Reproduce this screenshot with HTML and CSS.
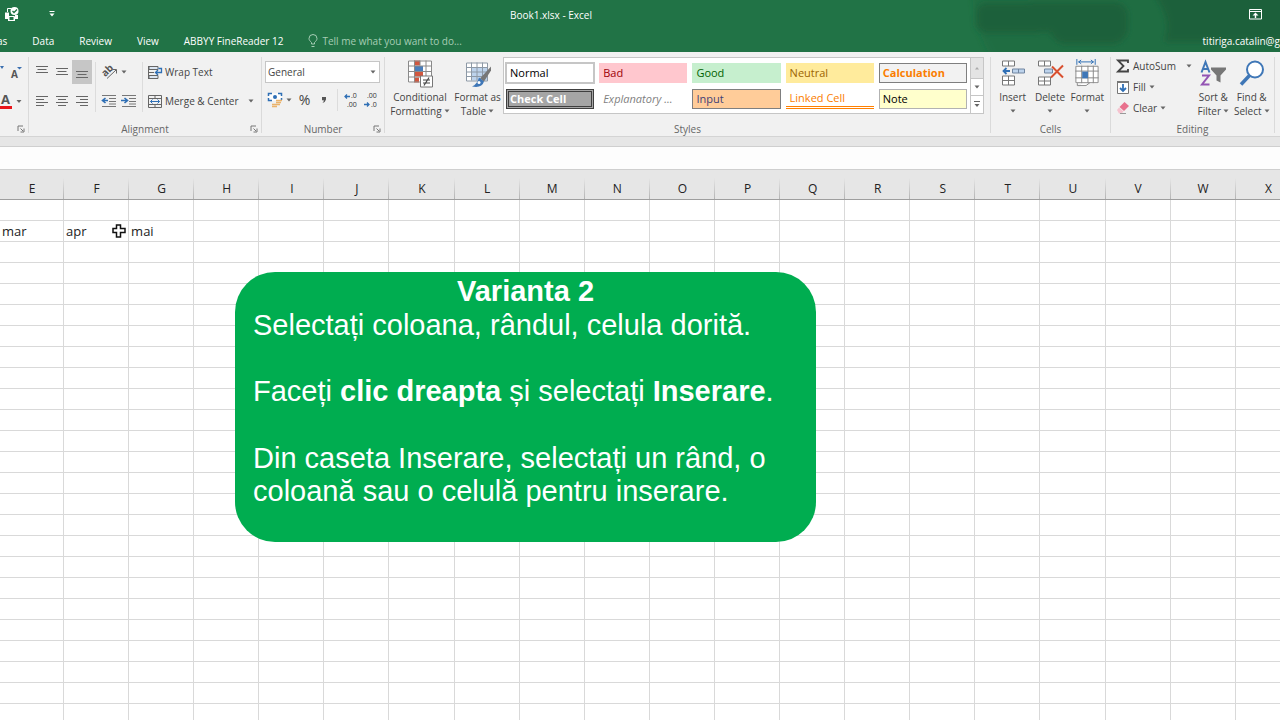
FILE: index.html
```
<!DOCTYPE html>
<html lang="ro">
<head>
    <meta charset="UTF-8">
    <meta name="viewport" content="width=device-width, initial-scale=1.0">
    <title>Book1.xlsx - Excel</title>
    <link rel="stylesheet" href="styles.css">
</head>
<body>
    <svg class="defs" aria-hidden="true">
        <symbol id="caret" viewBox="0 0 6 4"><path d="M0.5 0.5h5L3 3.5z" fill="#666"/></symbol>
        <symbol id="launcher" viewBox="0 0 8 8"><path d="M1 6V1h5M3.5 3.5L6 6M7 3.5V7H3.5" fill="none" stroke="#777"/></symbol>
    </svg>

    <header class="app-header">
        <svg class="smudges" viewBox="0 0 320 52" aria-hidden="true">
            <defs><filter id="soft"><feGaussianBlur stdDeviation="3"/></filter></defs>
            <g fill="#1e613b" filter="url(#soft)">
                <path d="M12-10h360v80H40Q16 40 12-10z" opacity="0.35"/>
                <rect x="16" y="3" width="70" height="30" rx="10"/>
                <rect x="60" y="2" width="108" height="30" rx="14"/>
                <rect x="90" y="8" width="78" height="36" rx="16"/>
                <path d="M190-10h180v52H204q10-24-14-52z"/>
            </g>
        </svg>
        <div class="title-bar">
            <button class="quick-button" aria-label="Print preview">
                <svg width="16" height="16" viewBox="0 0 16 16">
                    <path d="M1 6.5h4v4h6V9h3v4h-3v2H4v-2H1z" fill="#fff"/>
                    <rect x="5" y="10.5" width="5" height="4" fill="#217346" stroke="#fff"/>
                    <path d="M3.5 6V2.500h4" fill="none" stroke="#fff"/>
                    <circle cx="10.500" cy="5" r="4" fill="#fff"/>
                    <path d="M8.500 5l1.500 1.500L13 3.500" fill="none" stroke="#217346" stroke-width="1.300"/>
                </svg>
            </button>
            <button class="quick-button" aria-label="Customize toolbar">
                <svg width="6" height="6" viewBox="0 0 6 6"><path d="M0.500 0h5v1h-5zM0.500 2.500h5L3 5.500z" fill="#fff"/></svg>
            </button>
            <h1 class="file-name">Book1.xlsx - Excel</h1>
            <button class="display-button" aria-label="Ribbon display options">
                <svg width="13" height="11" viewBox="0 0 13 11">
                    <path d="M0.500 0.500h12v9.500h-12zM0.500 2.500h12" fill="none" stroke="#fff"/>
                    <path d="M6.500 3.500L9.500 6.500H7.200V9H5.800V6.500H3.500z" fill="#fff"/>
                </svg>
            </button>
        </div>
        <nav class="tabs">
            <a href="#">as</a>
            <a href="#">Data</a>
            <a href="#">Review</a>
            <a href="#">View</a>
            <a href="#">ABBYY FineReader 12</a>
            <label class="tell-me">
                <svg width="10" height="14" viewBox="0 0 10 14"><path d="M3.500 10V8.500C2 7 1 6 1 4.500a4 4 0 0 1 8 0C9 6 8 7 6.500 8.500V10zM3.500 12.500h3" fill="none" stroke="#a6cdb5"/></svg>
                <input type="text" placeholder="Tell me what you want to do..." aria-label="Tell me what you want to do">
            </label>
            <span class="account">titiriga.catalin@g</span>
        </nav>
    </header>

    <section class="ribbon">
        <div class="group group-font">
            <div class="group-body">
                <div class="icon-grid one">
                    <button class="icon-button" aria-label="Decrease font size">
                        <svg width="24" height="16" viewBox="0 0 24 16"><path d="M0 2h4L2 5z" fill="#3b6fb0"/><text x="11" y="14" class="glyph-small">A</text><path d="M17 3h5l-2.500 2.500z" fill="#3b6fb0"/></svg>
                    </button>
                    <button class="icon-button" aria-label="Font color">
                        <svg width="24" height="18" viewBox="0 0 24 18"><text x="1" y="12" class="glyph">A</text><path d="M0 14h12v3H0z" fill="#e8151b"/><path d="M16.500 8h5L19 11z" fill="#666"/></svg>
                    </button>
                </div>
            </div>
            <div class="group-label"><button class="launcher" aria-label="Font settings"><svg width="8" height="8"><use href="#launcher"/></svg></button></div>
        </div>

        <div class="group group-alignment">
            <div class="group-body">
                <div class="icon-grid three">
                    <button class="icon-button" aria-label="Top align"><svg width="14" height="14" viewBox="0 0 14 14"><path d="M1 1.500h12M2.500 4.500h9M1 7.500h12" stroke="#666"/></svg></button>
                    <button class="icon-button" aria-label="Middle align"><svg width="14" height="14" viewBox="0 0 14 14"><path d="M1 3.500h12M2.500 6.500h9M1 9.500h12" stroke="#666"/></svg></button>
                    <button class="icon-button selected" aria-label="Bottom align"><svg width="14" height="14" viewBox="0 0 14 14"><path d="M1 6.500h12M2.500 9.500h9M1 12.500h12" stroke="#666"/></svg></button>
                    <button class="icon-button" aria-label="Align left"><svg width="14" height="12" viewBox="0 0 14 12"><path d="M1 1.500h12M1 4.500h8M1 7.500h12M1 10.500h8" stroke="#666"/></svg></button>
                    <button class="icon-button" aria-label="Center"><svg width="14" height="12" viewBox="0 0 14 12"><path d="M1 1.500h12M3 4.500h8M1 7.500h12M3 10.500h8" stroke="#666"/></svg></button>
                    <button class="icon-button" aria-label="Align right"><svg width="14" height="12" viewBox="0 0 14 12"><path d="M1 1.500h12M5 4.500h8M1 7.500h12M5 10.500h8" stroke="#666"/></svg></button>
                </div>
                <span class="divider"></span>
                <div class="icon-grid two">
                    <button class="icon-button wide" aria-label="Orientation">
                        <svg width="16" height="16" viewBox="0 0 16 16"><text x="1" y="10" class="glyph-small" transform="rotate(-45 6 9)">ab</text><path d="M5 14.500L14 6M14.500 9.500V5.500h-4" fill="none" stroke="#666"/></svg>
                        <svg class="caret"><use href="#caret"/></svg>
                    </button>
                    <button class="icon-button" aria-label="Decrease indent"><svg width="16" height="14" viewBox="0 0 16 14"><path d="M1 1.500h14M8 4.500h7M8 7.500h7M1 12.500h14M8 10h7" stroke="#777"/><path d="M7 6.500H2M4.500 4L1.500 6.500l3 2.500" fill="none" stroke="#2f6fb5" stroke-width="1.600"/></svg></button>
                    <button class="icon-button" aria-label="Increase indent"><svg width="16" height="14" viewBox="0 0 16 14"><path d="M1 1.500h14M8 4.500h7M8 7.500h7M1 12.500h14M8 10h7" stroke="#777"/><path d="M0 6.500h5.500M3.500 4L6.500 6.500l-3 2.500" fill="none" stroke="#2f6fb5" stroke-width="1.600"/></svg></button>
                </div>
                <span class="divider"></span>
                <div class="text-buttons">
                    <button class="text-button">
                        <svg width="14" height="15" viewBox="0 0 14 15"><path d="M1 1.500h9v3H1zM1 13.500h9v-3H1z" fill="#dce6f2" stroke="#666"/><path d="M1 7.500h5M0.500 1v13" stroke="#666"/><path d="M10.500 3.500h3v4H8M10 5L7.500 7.500 10 10" fill="none" stroke="#2f6fb5" stroke-width="1.300"/></svg>
                        Wrap Text
                    </button>
                    <button class="text-button">
                        <svg width="14" height="15" viewBox="0 0 14 15"><path d="M0.500 1.500h13v12H0.500zM0.500 4.500h13M0.500 10.500h13M7 1.500v3M7 10.500v3" fill="none" stroke="#666"/><path d="M2.500 7.500h9M4.500 5.500l-2 2 2 2M9.500 5.500l2 2-2 2" fill="none" stroke="#2f6fb5"/></svg>
                        Merge &amp; Center
                        <svg class="caret"><use href="#caret"/></svg>
                    </button>
                </div>
            </div>
            <div class="group-label">Alignment<button class="launcher" aria-label="Alignment settings"><svg width="8" height="8"><use href="#launcher"/></svg></button></div>
        </div>

        <div class="group group-number">
            <div class="group-body number-body">
                <div class="select-box">
                    <select aria-label="Number format"><option>General</option><option>Number</option></select>
                    <svg class="caret"><use href="#caret"/></svg>
                </div>
                <div class="number-buttons">
                    <button class="icon-button wide" aria-label="Accounting format">
                        <svg width="16" height="16" viewBox="0 0 16 16"><path d="M1.500 1.500h13v7h-13z" fill="#fff"/><path d="M1.500 4V1.500H5M11 1.500h3.500V4M1.500 6v2.500H5M14.500 6v2" fill="none" stroke="#2f6fb5" stroke-width="1.500"/><circle cx="8" cy="5" r="2" fill="#2f6fb5"/><path d="M9 8.500h6M9 10.500h5M5 12.500h6M5 14.500h5M9 12.500h4" stroke="#eab36c" stroke-width="1.500"/></svg>
                        <svg class="caret"><use href="#caret"/></svg>
                    </button>
                    <button class="icon-button symbol">%</button>
                    <button class="icon-button comma" aria-label="Comma style"><svg width="6" height="8" viewBox="0 0 6 8"><path d="M1 1h4v2.500Q4.500 6 1.500 7 3 5.500 2.800 4.200H1z" fill="#555"/></svg></button>
                    <span class="divider"></span>
                    <button class="icon-button" aria-label="Increase decimal">
                        <svg width="14" height="16" viewBox="0 0 14 16"><path d="M6 4.500H1M3 2.500l-2 2 2 2" fill="none" stroke="#2f6fb5" stroke-width="1.300"/><text x="7" y="6" class="glyph-tiny">.0</text><text x="3" y="15" class="glyph-tiny">.00</text></svg>
                    </button>
                    <button class="icon-button" aria-label="Decrease decimal">
                        <svg width="14" height="16" viewBox="0 0 14 16"><text x="3" y="6" class="glyph-tiny">.00</text><text x="7" y="15" class="glyph-tiny">.0</text><path d="M0 12.500h5M3 10.500l2 2-2 2" fill="none" stroke="#2f6fb5" stroke-width="1.300"/></svg>
                    </button>
                </div>
            </div>
            <div class="group-label">Number<button class="launcher" aria-label="Number settings"><svg width="8" height="8"><use href="#launcher"/></svg></button></div>
        </div>

        <div class="group group-styles">
            <div class="group-body">
                <button class="big-button conditional">
                    <svg width="28" height="28" viewBox="0 0 28 28">
                        <path d="M2 1h24v22H2z" fill="#fff"/><path d="M8 1h6v5H8zM8 12h9v5H8zM8 18h5v5H8z" fill="#d1573f"/><path d="M8 6.500h9v5H8z" fill="#4a7ebb"/>
                        <path d="M2.500 1.500h23v21h-23zM8.500 1v21M14 1v5M20 1v17M2 6.500h24M2 12h24M2 17.500h24" fill="none" stroke="#8a8a8a"/>
                        <path d="M14.500 16.500h12v11h-12z" fill="#fff" stroke="#777"/><path d="M17 20.500h7M17 23.500h7M23 18l-5 8" stroke="#444" stroke-width="1.200"/>
                    </svg>
                    <span>Conditional</span>
                    <span>Formatting <svg class="caret"><use href="#caret"/></svg></span>
                </button>
                <button class="big-button table-format">
                    <svg width="28" height="28" viewBox="0 0 28 28">
                        <path d="M2.500 3.500h21v18h-21z" fill="#fff"/><path d="M8 8h15v13H8z" fill="#bdd3ec"/>
                        <path d="M2.500 3.500h21v18h-21zM7.500 3v18M13 3v18M18.500 3v18M2 8h22M2 12.500h22M2 17h22" fill="none" stroke="#8d99a6"/>
                        <path d="M27 7v4l-7 11-4-3z" fill="#777"/><path d="M15 18l5 4q-2 7-12 5 5-2 7-9z" fill="#3f77b7"/><circle cx="15" cy="23" r="1.500" fill="#fff"/>
                    </svg>
                    <span>Format as</span>
                    <span>Table <svg class="caret"><use href="#caret"/></svg></span>
                </button>
                <div class="gallery">
                    <div class="gallery-items">
                        <button class="style normal">Normal</button>
                        <button class="style bad">Bad</button>
                        <button class="style good">Good</button>
                        <button class="style neutral">Neutral</button>
                        <button class="style calculation">Calculation</button>
                        <button class="style check">Check Cell</button>
                        <button class="style explanatory">Explanatory ...</button>
                        <button class="style input">Input</button>
                        <button class="style linked">Linked Cell</button>
                        <button class="style note">Note</button>
                    </div>
                    <div class="gallery-scroll">
                        <button disabled aria-label="Scroll up"><svg width="6" height="4" viewBox="0 0 6 4"><path d="M1 3.500h4L3 1z" fill="#aaa"/></svg></button>
                        <button aria-label="Scroll down"><svg class="caret"><use href="#caret"/></svg></button>
                        <button aria-label="More styles"><svg width="6" height="7" viewBox="0 0 6 7"><path d="M0 0h6v1H0zM0.500 3h5L3 6z" fill="#666"/></svg></button>
                    </div>
                </div>
            </div>
            <div class="group-label">Styles</div>
        </div>

        <div class="group group-cells">
            <div class="group-body">
                <button class="big-button">
                    <svg width="26" height="28" viewBox="0 1 26 28"><path d="M2.500 2.500h12v5h-12zM8.500 2.500v5M2.500 17.500h12v9h-12zM8.500 17.500v9M2.500 22h12" fill="#fff" stroke="#777"/><path d="M12.500 10.500h12v4h-12zM18.500 10.500v4" fill="#bdd3ec" stroke="#7085a0"/><path d="M10 12.500H4M6.500 9.500l-3 3 3 3" fill="none" stroke="#2f6fb5" stroke-width="1.800"/></svg>
                    <span>Insert</span>
                    <span><svg class="caret"><use href="#caret"/></svg></span>
                </button>
                <button class="big-button">
                    <svg width="28" height="28" viewBox="0 1 28 28"><path d="M2.500 2.500h12v5h-12zM8.500 2.500v5M2.500 18.500h12v8h-12zM8.500 18.500v8M2.500 22.500h12" fill="#fff" stroke="#777"/><path d="M8.500 10.500h8v4h-8z" fill="#bdd3ec" stroke="#7085a0"/><path d="M16 8l11 11M27 7L15 19" stroke="#d9502f" stroke-width="2"/></svg>
                    <span>Delete</span>
                    <span><svg class="caret"><use href="#caret"/></svg></span>
                </button>
                <button class="big-button">
                    <svg width="28" height="30" viewBox="0 0 28 30"><path d="M2 7.500h24v18H16l-3 3H7l1-3H2z" fill="#fff"/><path d="M2.500 7.500h23v17h-23zM8.500 7v18M15 7v18M20.500 7v18M2 12.500h24M2 19.500h24M4 25v2.500h9l4-3" fill="none" stroke="#888"/><path d="M9 13h6v7H9z" fill="#3f77b7"/><path d="M3.500 0v6M22.500 0v6M5 3h16M8 1L5.500 3 8 5M18 1l2.500 2L18 5" fill="none" stroke="#2f6fb5"/></svg>
                    <span>Format</span>
                    <span><svg class="caret"><use href="#caret"/></svg></span>
                </button>
            </div>
            <div class="group-label">Cells</div>
        </div>

        <div class="group group-editing">
            <div class="group-body">
                <div class="edit-list">
                    <button class="text-button">
                        <svg width="14" height="14" viewBox="0 0 14 14"><path d="M12 4V1.500H2L7.500 7 2 12.500h10V10" fill="none" stroke="#444" stroke-width="1.800"/></svg>
                        AutoSum
                        <svg class="caret far"><use href="#caret"/></svg>
                    </button>
                    <button class="text-button">
                        <svg width="14" height="14" viewBox="0 0 14 14"><path d="M1.500 1.500h11v12h-11z" fill="#fff" stroke="#777"/><path d="M1 1h12v2H1z" fill="#777"/><path d="M7 4v7M4 8l3 3 3-3" fill="none" stroke="#2f6fb5" stroke-width="1.800"/></svg>
                        Fill
                        <svg class="caret"><use href="#caret"/></svg>
                    </button>
                    <button class="text-button">
                        <svg width="14" height="14" viewBox="0 0 14 14"><path d="M8.500 1L13 5 8 10 3.500 6z" fill="#e8718d"/><path d="M3 6.500L7.500 10.500 5.500 12.500H3L1 9z" fill="#f6c3cf"/><path d="M4 12.500h6" stroke="#999"/></svg>
                        Clear
                        <svg class="caret"><use href="#caret"/></svg>
                    </button>
                </div>
                <button class="big-button">
                    <svg width="28" height="28" viewBox="0 0 28 28"><path d="M2.500 13L6.500 2.500 10.500 13M4 9.500h5" fill="none" stroke="#3f77b7" stroke-width="2"/><path d="M3 16h7L3 25h7.500" fill="none" stroke="#9454b4" stroke-width="2"/><path d="M12 8h15v2l-5.500 6v7l-4-2v-5L12 10z" fill="#777"/></svg>
                    <span>Sort &amp;</span>
                    <span>Filter <svg class="caret"><use href="#caret"/></svg></span>
                </button>
                <button class="big-button">
                    <svg width="28" height="28" viewBox="0 0 28 28"><circle cx="17" cy="10" r="8" fill="#fff" stroke="#3f77b7" stroke-width="2"/><path d="M11.500 16L3 25" stroke="#3f77b7" stroke-width="3.500"/></svg>
                    <span>Find &amp;</span>
                    <span>Select <svg class="caret"><use href="#caret"/></svg></span>
                </button>
            </div>
            <div class="group-label">Editing</div>
        </div>
    </section>

    <div class="formula-bar"><input type="text" aria-label="Formula bar"></div>

    <main class="sheet">
        <table class="cells">
            <thead>
                <tr id="columns"></tr>
            </thead>
            <tbody id="rows"></tbody>
        </table>
        <svg class="cursor" viewBox="0 0 14 14"><path d="M4.500 1h4v3.500H13v4H8.500V13h-4V8.500H1v-4h3.500z" fill="#fff" stroke="#111" stroke-width="1.500"/></svg>
        <article class="callout">
            <h2>Varianta 2</h2>
            <p>Selectați coloana, rândul, celula dorită.</p>
            <p>Faceți <b>clic dreapta</b> și selectați <b>Inserare</b>.</p>
            <p>Din caseta Inserare, selectați un rând, o coloană sau o celulă pentru inserare.</p>
        </article>
    </main>

    <script src="script.js"></script>
</body>
</html>
```

FILE: styles.css
```
* {
    box-sizing: border-box;
}
body {
    margin: 0;
    height: 100vh;
    display: flex;
    flex-direction: column;
    overflow: hidden;
    background: #fff;
    color: #444;
    font-family: "Open Sans", "Noto Sans", sans-serif;
    font-size: 10px;
    line-height: 14px;
}
button,
input,
select {
    font: inherit;
    color: inherit;
    margin: 0;
    padding: 0;
    border: none;
    background: none;
}
svg {
    display: block;
    flex: none;
    overflow: visible;
}
.defs {
    position: absolute;
    width: 0;
    height: 0;
}
.caret {
    width: 6px;
    height: 4px;
}

/* Title bar and tabs */
.app-header {
    position: relative;
    background: #217346;
    color: #fff;
    overflow: hidden;
    flex: none;
}
.smudges {
    position: absolute;
    top: 0;
    right: 0;
    width: 320px;
    height: 52px;
}
.title-bar {
    position: relative;
    display: flex;
    align-items: center;
    height: 30px;
    padding: 0 18px 2px 4px;
}
.quick-button {
    margin-right: 29px;
}
.file-name {
    flex: 1;
    margin: 0;
    padding: 2px 0 0 426px;
    font-size: 10px;
    font-weight: normal;
}
.tabs {
    position: relative;
    display: flex;
    align-items: center;
    gap: 25px;
    height: 22px;
    margin-left: -3px;
}
.tabs a {
    color: #fff;
    text-decoration: none;
}
.tell-me {
    flex: 1;
    display: flex;
    align-items: center;
    gap: 4px;
}
.tell-me input {
    flex: 1;
}
.tell-me input::placeholder {
    color: #a6cdb5;
    opacity: 1;
}

/* Ribbon */
.ribbon {
    display: flex;
    flex: none;
    height: 85px;
    padding-top: 5px;
    background: #f1f1f1;
    border-bottom: 1px solid #d4d4d4;
}
.group {
    display: flex;
    flex-direction: column;
    flex: none;
    border-right: 1px solid #dadada;
    margin-bottom: 3px;
}
.group-font {
    width: 29px;
}
.group-alignment {
    width: 233px;
}
.group-number {
    width: 123px;
}
.group-styles {
    flex: 1;
}
.group-cells {
    width: 120px;
}
.group-editing {
    width: 164px;
    margin-right: 5px;
}
.group-body {
    display: flex;
    flex: none;
    height: 62px;
    padding: 3px 3px 0;
}
.group-font .group-body {
    padding-left: 0;
}
.group-label {
    position: relative;
    text-align: center;
    color: #666;
    padding-top: 3px;
}
.launcher {
    position: absolute;
    right: 3px;
    top: 6px;
}
.icon-grid {
    display: grid;
    grid-auto-rows: 24px;
    row-gap: 5px;
    align-content: start;
}
.icon-grid.one {
    grid-template-columns: 24px;
}
.icon-grid.two {
    grid-template-columns: repeat(2, 20px);
}
.icon-grid.three {
    grid-template-columns: repeat(3, 20px);
}
.icon-button {
    display: flex;
    align-items: center;
    justify-content: center;
}
.icon-button.wide {
    gap: 3px;
}
.icon-grid .wide {
    grid-column: span 2;
    justify-content: flex-start;
    padding-left: 3px;
}
.icon-button.selected {
    background: #c6c6c6;
}
.divider {
    width: 1px;
    height: 50px;
    margin: 2px 3px 0;
    background: #dcdcdc;
}
.text-buttons {
    display: grid;
    grid-template-rows: 24px 24px;
    row-gap: 5px;
    padding-left: 2px;
    align-content: start;
}
.text-button {
    display: flex;
    align-items: center;
    gap: 3px;
    white-space: nowrap;
}
.text-buttons .caret {
    margin-left: 6px;
}
.glyph {
    font: bold 13px "Open Sans", sans-serif;
    fill: #555;
}
.glyph-small {
    font: bold 10px "Open Sans", sans-serif;
    fill: #555;
}
.glyph-tiny {
    font: 7px "Open Sans", sans-serif;
    fill: #333;
}
.number-body {
    flex-direction: column;
    gap: 5px;
}
.select-box {
    position: relative;
    height: 22px;
    width: 115px;
    margin-top: 1px;
}
.select-box select {
    appearance: none;
    width: 100%;
    height: 100%;
    padding-left: 2px;
    background: #fff;
    border: 1px solid #c6c6c6;
}
.select-box .caret {
    position: absolute;
    right: 4px;
    top: 9px;
    pointer-events: none;
}
.number-buttons {
    display: flex;
    align-items: center;
    height: 24px;
}
.number-buttons .icon-button {
    width: 20px;
}
.number-buttons .icon-button.wide {
    width: 30px;
}
.number-buttons .symbol {
    font-size: 14px;
}
.number-buttons .divider {
    height: 22px;
    margin: 0 3px;
}
.big-button {
    flex: 1;
    display: flex;
    flex-direction: column;
    align-items: center;
    white-space: nowrap;
}
.big-button > svg {
    height: 29px;
    margin: -1px 0 2px;
}
.big-button span {
    display: flex;
    align-items: center;
    gap: 2px;
    height: 14px;
}
.big-button.conditional {
    flex: 0 0 64px;
}
.big-button.table-format {
    flex: 0 0 51px;
}
.group-cells .group-body {
    padding: 3px 4px 0 3px;
}

/* Cell styles gallery */
.group-styles .group-body {
    padding: 0 6px 0 3px;
}
.group-styles .big-button {
    padding-top: 3px;
}
.gallery {
    flex: 1;
    display: flex;
    height: 57px;
    background: #fff;
    border: 1px solid #c6c6c6;
}
.gallery-items {
    flex: 1;
    display: grid;
    grid-template-columns: repeat(5, 1fr);
    grid-template-rows: 20px 20px;
    gap: 6px 5px;
    padding: 5px 3px 4px 2px;
}
.gallery-scroll {
    width: 13px;
    display: grid;
    grid-template-rows: 20px 17px 18px;
    border-left: 1px solid #c6c6c6;
}
.gallery-scroll button {
    display: flex;
    align-items: center;
    justify-content: center;
}
.gallery-scroll button:disabled {
    background: #e4e4e4;
}
.gallery-scroll button + button {
    border-top: 1px solid #c6c6c6;
}
.style {
    padding-left: 4px;
    font-size: 11px;
    text-align: left;
    white-space: nowrap;
    overflow: hidden;
}
.style.normal {
    color: #000;
    border: 1px solid #c6c6c6;
    padding-left: 3px;
    outline: 1px solid #c6c6c6;
}
.style.bad {
    background: #ffc7ce;
    color: #9c0006;
}
.style.good {
    background: #c6efce;
    color: #006100;
}
.style.neutral {
    background: #ffeb9c;
    color: #9c6500;
}
.style.calculation {
    background: #f2f2f2;
    border: 1px solid #7f7f7f;
    padding-left: 3px;
    color: #fa7d00;
    font-weight: bold;
}
.style.check {
    background: #a5a5a5;
    border: 3px double #3f3f3f;
    padding-left: 1px;
    color: #fff;
    font-weight: bold;
}
.style.explanatory {
    color: #7f7f7f;
    font-style: italic;
}
.style.input {
    background: #ffcc99;
    border: 1px solid #7f7f7f;
    padding-left: 3px;
    color: #3f3f76;
}
.style.linked {
    color: #fa7d00;
    border-bottom: 3px double #ff8001;
}
.style.note {
    background: #ffffcc;
    border: 1px solid #b2b2b2;
    padding-left: 3px;
    color: #000;
}

/* Editing group */
.edit-list {
    flex: 0 0 78px;
    display: grid;
    grid-template-rows: repeat(3, 21px);
    margin: -5px 2px 0 0;
    padding-left: 2px;
}
.edit-list .far {
    margin-left: auto;
}

/* Formula bar */
.formula-bar {
    flex: none;
    padding: 9px 0 8px;
    background: #e6e6e6;
}
.formula-bar input {
    display: block;
    width: 100%;
    height: 24px;
    background: #fdfdfd;
    border: solid #cfcfcf;
    border-width: 1px 0;
}

/* Sheet */
.sheet {
    position: relative;
    flex: 1;
    overflow: hidden;
}
.cells {
    table-layout: fixed;
    width: calc(100% + 21px);
    border-collapse: separate;
    border-spacing: 0;
    color: #222;
}
.cells th {
    height: 22px;
    padding: 0;
    font-size: 12px;
    font-weight: normal;
    background: linear-gradient(#e6e6e6, #b4b4b4) right / 1px 100% no-repeat #e6e6e6;
    border-bottom: 1px solid #9e9e9e;
}
.cells th:first-child {
    width: 64px;
}
.cells td {
    height: 21px;
    padding: 0 2px;
    font-size: 13px;
    line-height: 16px;
    border-right: 1px solid #d9d9d9;
    border-bottom: 1px solid #d9d9d9;
}
.cursor {
    position: absolute;
    left: 112px;
    top: 46px;
    width: 14px;
    height: 14px;
}
.callout {
    position: absolute;
    left: 235px;
    top: 94px;
    width: 581px;
    padding: 3px 18px 34px;
    border-radius: 40px;
    background: #00ad50;
    color: #fff;
    font: 29px/33px "Liberation Sans", Arial, sans-serif;
}
.callout h2 {
    margin: 0 0 1px;
    font-size: 29px;
    text-align: center;
}
.callout p {
    margin: 0 0 33px;
}
.callout p + p {
    margin-bottom: 34px;
}
.callout p:last-child {
    margin-bottom: 0;
}
```

FILE: script.js
```
const letters = 'EFGHIJKLMNOPQRSTUVWX'.split('');
const values = { E: 'mar', F: 'apr', G: 'mai' };

document.getElementById('columns').innerHTML = letters.map(l => `<th>${l}</th>`).join('');

// The months are on the second row, the other rows are empty
let html = '';
for (let row = 0; row < 26; row++) {
    html += '<tr>' + letters.map(l => `<td>${row === 1 && values[l] ? values[l] : ''}</td>`).join('') + '</tr>';
}
document.getElementById('rows').innerHTML = html;
```
